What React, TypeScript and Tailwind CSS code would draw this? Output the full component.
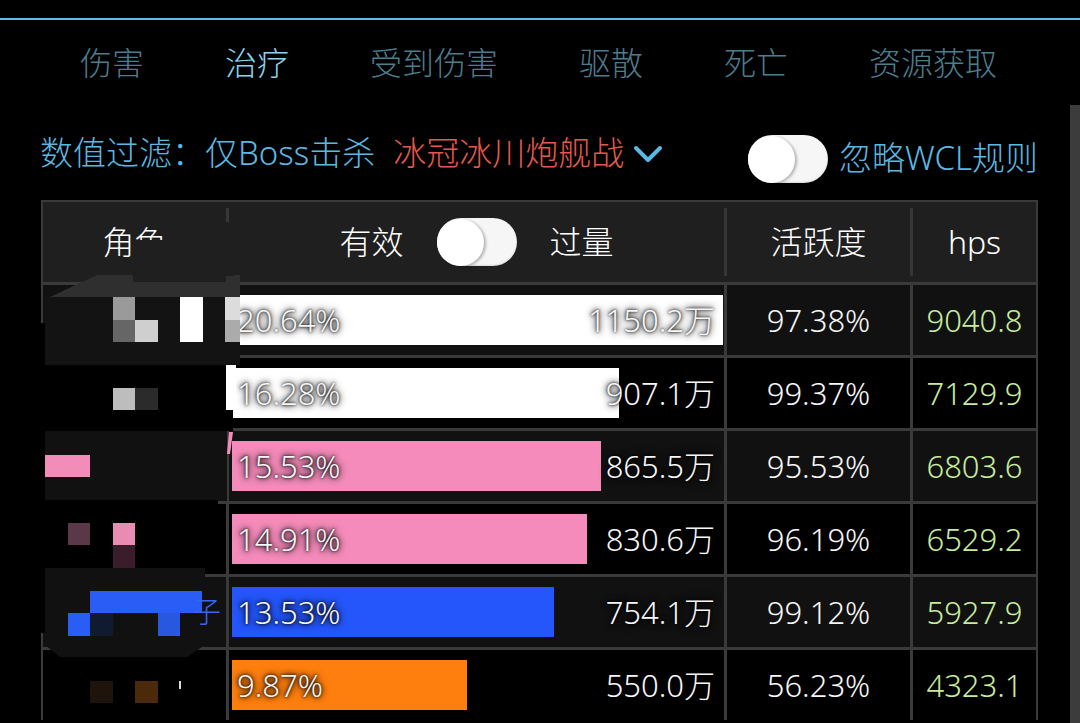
import React from "react";

type Row = {
  pct: string;
  val: string;
  raw: number;
  act: string;
  hps: string;
  color: string;
};

const rows: Row[] = [
  { pct: "20.64%", val: "1150.2万", raw: 1150.2, act: "97.38%", hps: "9040.8", color: "#ffffff" },
  { pct: "16.28%", val: "907.1万", raw: 907.1, act: "99.37%", hps: "7129.9", color: "#ffffff" },
  { pct: "15.53%", val: "865.5万", raw: 865.5, act: "95.53%", hps: "6803.6", color: "#f48bba" },
  { pct: "14.91%", val: "830.6万", raw: 830.6, act: "96.19%", hps: "6529.2", color: "#f48bba" },
  { pct: "13.53%", val: "754.1万", raw: 754.1, act: "99.12%", hps: "5927.9", color: "#2456fb" },
  { pct: "9.87%", val: "550.0万", raw: 550.0, act: "56.23%", hps: "4323.1", color: "#ff7f0e" },
];

const maxVal = Math.max(...rows.map((r) => r.raw));

const tabs = ["伤害", "治疗", "受到伤害", "驱散", "死亡", "资源获取"];

function Toggle() {
  return (
    <div className="flex h-[48px] w-[80px] shrink-0 items-center rounded-full bg-[#f6f6f6] shadow-[inset_0_-1px_2px_rgba(0,0,0,0.12)]">
      <div className="h-[47px] w-[47px] rounded-full bg-white shadow-[2px_1px_3px_rgba(0,0,0,0.28)]" />
    </div>
  );
}

const shadowText = "[text-shadow:0_0_3px_#000,0_0_6px_rgba(0,0,0,0.9),0_0_9px_rgba(0,0,0,0.6)]";

// censor mosaic over the character names (page coordinates)
const blocks: [number, number, number, number, string][] = [
  // header cover
  [133, 240, 93, 42, "#1f1f1f"],
  [222, 222, 12, 54, "#1f1f1f"],
  // left border hidden
  [41, 323, 4, 310, "#000000"],
  // row1
  [45, 297, 195, 68, "#131313"],
  [113, 297, 22, 23, "#9a9a9a"],
  [113, 320, 22, 22, "#666666"],
  [135, 320, 23, 22, "#cfcfcf"],
  [180, 297, 23, 45, "#ffffff"],
  [225, 297, 15, 23, "#dcdcdc"],
  [225, 320, 15, 22, "#ababab"],
  // row2
  [41, 365, 192, 66, "#000000"],
  [113, 388, 22, 22, "#bdbdbd"],
  [135, 388, 23, 22, "#2b2b2b"],
  [226, 365, 10, 45, "#ffffff"],
  // row3
  [45, 431, 182, 70, "#111111"],
  [45, 455, 45, 22, "#f28cb9"],
  // row3/4 border
  [41, 500, 177, 5, "#000000"],
  // row4
  [68, 523, 22, 22, "#5a3848"],
  [113, 523, 22, 22, "#e88cb4"],
  [113, 545, 22, 23, "#3a1c2a"],
  // row5 blocks
  [90, 591, 112, 22, "#2a5df5"],
  [68, 613, 22, 23, "#2a5df5"],
  [90, 613, 23, 23, "#101a30"],
  [158, 613, 22, 23, "#2858e0"],
  // row6
  [90, 681, 23, 22, "#1e140c"],
  [135, 681, 23, 22, "#4b2a0b"],
];

function Mosaic() {
  return (
    <svg
      className="pointer-events-none absolute left-0 top-0"
      width={1080}
      height={723}
      viewBox="0 0 1080 723"
    >
      <polygon points="97,275 240,275 240,297 50,297" fill="#2f2f2f" />
      {blocks.slice(0, 20).map(([x, y, w, h, c], i) => (
        <rect key={i} x={x} y={y} width={w} height={h} fill={c} />
      ))}
      <polygon points="229,432 233,432 230,454 227,454" fill="#f48bba" />
      <polygon points="45,568 205,568 205,645 187,657 60,657 45,645" fill="#111111" />
      {blocks.slice(20).map(([x, y, w, h, c], i) => (
        <rect key={"b" + i} x={x} y={y} width={w} height={h} fill={c} />
      ))}
      <rect x={179} y={681} width={2} height={8} fill="#dddddd" />
    </svg>
  );
}

export default function App() {
  return (
    <div className="relative h-[723px] w-[1080px] overflow-hidden bg-black font-['Noto_Sans','Noto_Sans_CJK_SC',sans-serif] font-light">
      <div className="h-[18px]" />
      <div className="h-[2px] bg-[#62b9e2]" />

      {/* tabs */}
      <nav className="mt-[21px] flex gap-[81px] pl-[80px] text-[32px] leading-[44px]">
        {tabs.map((t) => (
          <span
            key={t}
            className={t === "治疗" ? "text-[#8ad4f1]" : "text-[#4b7d8e]"}
          >
            {t}
          </span>
        ))}
      </nav>

      {/* filter row */}
      <div className="mt-[50px] flex h-[48px] w-[1038px] items-center justify-between pl-[40px]">
        <div className="mb-[12px] flex items-center text-[33px] leading-[44px]">
          <span className="text-[#5ab8e2]">数值过滤：</span>
          <span className="text-[#5ab8e2]">仅Boss击杀</span>
          <span className="ml-[18px] text-[#e4594f]">冰冠冰川炮舰战</span>
          <svg className="ml-[8px] mt-[2px]" width="32" height="22" viewBox="0 0 32 22">
            <polyline
              points="4,5 16,17 28,5"
              fill="none"
              stroke="#5ab8e2"
              strokeWidth="4"
              strokeLinecap="round"
              strokeLinejoin="round"
            />
          </svg>
        </div>
        <div className="flex items-center gap-[11px]">
          <Toggle />
          <span className="mb-[2px] text-[33px] leading-[44px] text-[#5ab8e2]">忽略WCL规则</span>
        </div>
      </div>

      {/* table */}
      <div className="ml-[41px] mt-[17px] w-[997px] border-x-2 border-t-2 border-[#3a3a3a]">
        <div className="grid h-[80px] grid-cols-[183px_3px_495px_3px_183px_3px_123px] bg-[#1f1f1f] text-[32px] leading-[44px] text-white">
          <div className="flex items-center justify-center">角色</div>
          <div className="my-[6px] bg-[#363636]" />
          <div className="flex items-center justify-center gap-[33px]">
            <span>有效</span>
            <Toggle />
            <span>过量</span>
          </div>
          <div className="my-[6px] bg-[#363636]" />
          <div className="flex items-center justify-center">活跃度</div>
          <div className="my-[6px] bg-[#363636]" />
          <div className="flex items-center justify-center">hps</div>
        </div>

        {rows.map((r, i) => (
          <div
            key={i}
            className={
              "grid h-[73px] grid-cols-[183px_3px_495px_3px_183px_3px_123px] border-t-[3px] border-[#3a3a3a] text-[31px] leading-[40px] text-[#f7f7f7] " +
              (i % 2 === 0 ? "bg-[#111111]" : "bg-black")
            }
          >
            <div />
            <div className="bg-[#3a3a3a]" />
            <div className="flex items-center pl-[3px] pr-[1px]">
              <div className="relative flex h-[50px] w-full items-center justify-between pl-[5px] pr-[8px]">
                <div
                  className="absolute left-0 top-0 h-full"
                  style={{ width: `${(r.raw / maxVal) * 100}%`, backgroundColor: r.color }}
                />
                <span className={"relative " + shadowText}>{r.pct}</span>
                <span className={"relative " + shadowText}>{r.val}</span>
              </div>
            </div>
            <div className="bg-[#3a3a3a]" />
            <div className="flex items-center justify-center">{r.act}</div>
            <div className="bg-[#3a3a3a]" />
            <div className="flex items-center justify-center text-[#c6ec9d]">{r.hps}</div>
          </div>
        ))}
      </div>

      <Mosaic />
      <span className="pointer-events-none absolute left-[192px] top-[592px] text-[29px] leading-[40px] text-[#3766ee]">
        子
      </span>

      {/* scrollbar strip */}
      <div className="absolute bottom-0 right-0 top-[105px] w-[10px] bg-[#3c3c3c]" />
    </div>
  );
}
